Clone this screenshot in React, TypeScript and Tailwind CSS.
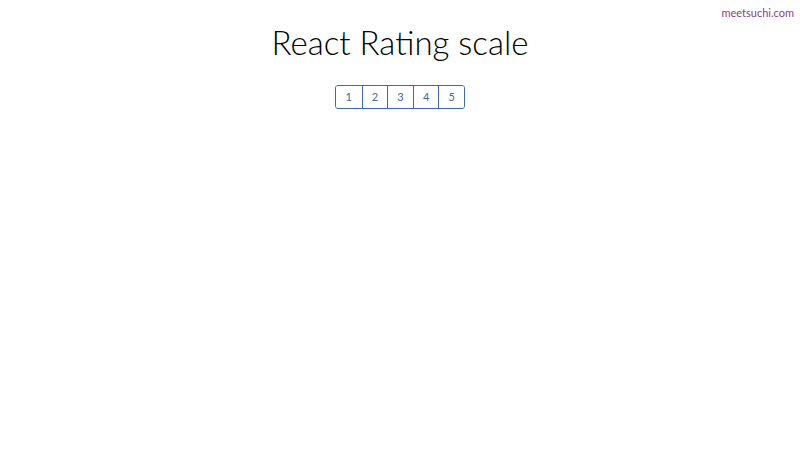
import { useState } from "react";

const SCALE = [1, 2, 3, 4, 5];

export default function App() {
  const [picked, setPicked] = useState<number | null>(null);

  return (
    <div className="relative min-h-[450px] w-full bg-white font-['Lato',sans-serif] text-black">
      <a
        href="#"
        className="absolute right-[6px] top-[5px] text-[11px] text-[#8b3a93]"
      >
        meetsuchi.com
      </a>
      <h1 className="pt-[22px] text-center text-[33px] font-light leading-[40px]">
        React Rating scale
      </h1>
      <div className="mt-[23px] flex justify-center">
        <div className="flex overflow-hidden rounded-[3px] border border-[#3c6ba5]">
          {SCALE.map((n) => (
            <button
              key={n}
              onClick={() => setPicked(n)}
              className={
                "h-[22px] w-[25.6px] border-l border-[#3c6ba5] text-[11px] text-[#3c6ba5] first:border-l-0 " +
                (picked === n ? "bg-[#3c6ba5] text-white" : "bg-white")
              }
            >
              {n}
            </button>
          ))}
        </div>
      </div>
    </div>
  );
}
